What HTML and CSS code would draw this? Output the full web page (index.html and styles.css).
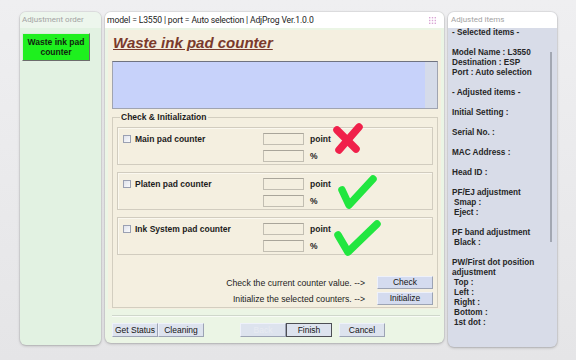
FILE: index.html
```html
<!DOCTYPE html>
<html lang="en">
<head>
  <meta charset="UTF-8" />
  <title>AdjProg - Waste ink pad counter</title>
  <link rel="stylesheet" href="styles.css">
</head>
<body>
  <!-- Left: adjustment order -->
  <div class="win order">
    <div class="titlebar dim">Adjustment order</div>
    <button class="order-item">Waste ink pad<br>counter</button>
  </div>

  <!-- Middle: main dialog -->
  <div class="win main">
    <div class="titlebar">
      <span class="model">model = L3550 | port = Auto selection | AdjProg Ver.1.0.0</span>
      <svg class="grip" width="7" height="7" viewBox="0 0 7 7">
        <g fill="#d9a6d4">
          <rect x="0" y="0" width="1.4" height="1.4"/><rect x="2.8" y="0" width="1.4" height="1.4"/><rect x="5.6" y="0" width="1.4" height="1.4"/>
          <rect x="0" y="2.8" width="1.4" height="1.4"/><rect x="2.8" y="2.8" width="1.4" height="1.4"/><rect x="5.6" y="2.8" width="1.4" height="1.4"/>
          <rect x="0" y="5.6" width="1.4" height="1.4"/><rect x="2.8" y="5.6" width="1.4" height="1.4"/><rect x="5.6" y="5.6" width="1.4" height="1.4"/>
        </g>
      </svg>
    </div>
    <div class="main-body">
      <div class="panel">
        <h1 class="heading">Waste ink pad counter</h1>
        <div class="status-box"><div class="status-scroll"></div></div>

        <fieldset class="group">
          <legend>Check &amp; Initialization</legend>

          <div class="counter">
            <span class="check"></span>
            <span class="label">Main pad counter</span>
            <span class="field"></span><span class="unit">point</span>
            <span></span><span></span>
            <span class="field"></span><span class="unit">%</span>
            <svg class="mark mark-x" width="32" height="32" viewBox="0 0 32 32">
              <g stroke="#f0204a" stroke-width="7.5" stroke-linecap="round" fill="none">
                <path d="M5 8 L24 27"/>
                <path d="M27 5 L7 28"/>
              </g>
            </svg>
          </div>

          <div class="counter">
            <span class="check"></span>
            <span class="label">Platen pad counter</span>
            <span class="field"></span><span class="unit">point</span>
            <span></span><span></span>
            <span class="field"></span><span class="unit">%</span>
            <svg class="mark mark-ok1" width="41" height="38" viewBox="0 0 41 38">
              <path d="M5 17 L12 32 L36 6" stroke="#22e640" stroke-width="7.5" stroke-linecap="round" stroke-linejoin="round" fill="none"/>
            </svg>
          </div>

          <div class="counter">
            <span class="check"></span>
            <span class="label">Ink System pad counter</span>
            <span class="field"></span><span class="unit">point</span>
            <span></span><span></span>
            <span class="field"></span><span class="unit">%</span>
            <svg class="mark mark-ok2" width="49" height="39" viewBox="0 0 49 39">
              <path d="M5 17 L15 34 L44 6" stroke="#22e640" stroke-width="7.5" stroke-linecap="round" stroke-linejoin="round" fill="none"/>
            </svg>
          </div>

          <div class="actions">
            <span>Check the current counter value. --&gt;</span>
            <button class="btn">Check</button>
            <span>Initialize the selected counters. --&gt;</span>
            <button class="btn">Initialize</button>
          </div>
        </fieldset>
      </div>

      <div class="separator"></div>

      <div class="footer">
        <div class="btn-pair">
          <button class="btn foot">Get Status</button>
          <button class="btn foot">Cleaning</button>
        </div>
        <div class="btn-pair nav">
          <button class="btn foot" disabled>Back</button>
          <button class="btn foot default">Finish</button>
        </div>
        <button class="btn foot">Cancel</button>
      </div>
    </div>
  </div>

  <!-- Right: adjusted items -->
  <div class="win items">
    <div class="titlebar dim">Adjusted items</div>
    <div class="item-list">
      <p>- Selected items -</p>
      <p>Model Name : L3550<br>Destination : ESP<br>Port : Auto selection</p>
      <p>- Adjusted items -</p>
      <p>Initial Setting :</p>
      <p>Serial No. :</p>
      <p>MAC Address :</p>
      <p>Head ID :</p>
      <p>PF/EJ adjustment<br><span class="sub">Smap :</span><br><span class="sub">Eject :</span></p>
      <p>PF band adjustment<br><span class="sub">Black :</span></p>
      <p>PW/First dot position<br>adjustment<br><span class="sub">Top :</span><br><span class="sub">Left :</span><br><span class="sub">Right :</span><br><span class="sub">Bottom :</span><br><span class="sub">1st dot :</span></p>
    </div>
    <div class="scrollbar"></div>
  </div>
</body>
</html>
```

FILE: styles.css
```css
/* ==========================================================================
   Page
   ========================================================================== */
*, *::before, *::after {
  box-sizing: border-box;
}
body {
  margin: 0;
  width: 576px;
  height: 360px;
  overflow: hidden;
  padding: 12px 0 0 20px;
  display: flex;
  align-items: flex-start;
  gap: 4px;
  font-family: "Liberation Sans", Arial, sans-serif;
  color: #1c1c1c;
  background: linear-gradient(180deg, #efeff1, #e5e5e7);
}
button {
  font-family: inherit;
}

/* ==========================================================================
   Windows
   ========================================================================== */
.win {
  position: relative;
  border-radius: 6px;
  overflow: hidden;
  box-shadow: 0 1px 3px rgba(0, 0, 0, 0.22), 0 0 0 1px rgba(0, 0, 0, 0.05);
  display: flex;
  flex-direction: column;
}
.titlebar {
  height: 16px;
  line-height: 16px;
  padding-left: 2px;
  font-family: Roboto, sans-serif;
  font-size: 8px;
  color: #222;
  background: #fff;
  display: flex;
  justify-content: space-between;
  align-items: center;
  white-space: nowrap;
}
.titlebar.dim {
  color: #a3a3a3;
}
.model {
  font-size: 8.6px;
  letter-spacing: -0.15px;
}

/* Left window */
.order {
  width: 81px;
  height: 333px;
  background: #e2f2e2;
}
.order .titlebar {
  background: #edf6ed;
}
.order-item {
  margin: 5px 0 0 2px;
  width: 68px;
  height: 28px;
  padding: 0;
  font-size: 8.5px;
  font-weight: bold;
  line-height: 10px;
  color: #10250f;
  background: #1ef01e;
  border: 1px solid;
  border-color: #d8ecd8 #6c6c6c #6c6c6c #d8ecd8;
}

/* Middle window */
.main {
  width: 339px;
  height: 331px;
  background: #ebf5e5;
}
.main .titlebar {
  padding-right: 8px;
}
.main-body {
  padding: 2px 3px 0 3px;
}
.panel {
  background: #f4efe0;
  padding: 4px 3px 1px 4px;
}
.heading {
  margin: 0 0 9px 1px;
  font-size: 15px;
  line-height: 18px;
  font-style: italic;
  font-weight: bold;
  text-decoration: underline;
  color: #7a3a2c;
}
.status-box {
  height: 48px;
  display: flex;
  background: #c7d2fa;
  border: 1px solid #a0a4b0;
  border-top-color: #6f7380;
  margin-bottom: 3px;
}
.status-scroll {
  margin-left: auto;
  width: 12px;
  background: #d5dbe9;
}

/* Check & Initialization group */
.group {
  margin: 0;
  padding: 5px 4px 2px 4px;
  border: 1px solid #d3cec0;
  min-width: 0;
}
.group legend {
  margin-left: 3px;
  padding: 0 1px;
  font-size: 8.5px;
  line-height: 10px;
  font-weight: bold;
}
.counter {
  position: relative;
  height: 38px;
  margin-bottom: 7px;
  padding: 5px 0 0 5px;
  border: 1px solid #d1ccbf;
  box-shadow: inset 1px 1px 0 #fbf8ef;
  display: grid;
  grid-template-columns: 8px 124px 41px auto;
  grid-template-rows: 12px 13px;
  column-gap: 4px;
  row-gap: 4px;
  align-items: center;
  font-size: 8.5px;
  font-weight: bold;
}
.counter:last-of-type {
  height: 39px;
}
.counter .field {
  height: 12px;
  border: 1px solid #c2beb2;
  border-top-color: #a9a59a;
  background: #f4efe0;
}
.counter .field + .unit {
  margin-left: 2px;
}
.check {
  width: 8px;
  height: 8px;
  border: 1px solid #9aa0b2;
  background: linear-gradient(135deg, #dfe2ea, #fafbfd);
}
.mark {
  position: absolute;
}
.mark-x {
  left: 214px;
  top: -6px;
}
.mark-ok1 {
  left: 219px;
  top: 0;
}
.mark-ok2 {
  left: 215px;
  top: 0;
}

.actions {
  margin-top: 21px;
  display: grid;
  grid-template-columns: 1fr 56px;
  column-gap: 12px;
  row-gap: 3px;
  align-items: center;
  justify-items: end;
  font-size: 8.7px;
}
.btn {
  height: 13px;
  width: 56px;
  padding: 0;
  font-size: 8.5px;
  line-height: 11px;
  color: #151515;
  background: #d4dbef;
  border: 1px solid;
  border-color: #eef1fa #9ca3b4 #9ca3b4 #eef1fa;
}

/* Bottom buttons */
.separator {
  margin: 6px 1px 0 4px;
  height: 2px;
  border-top: 1px solid #cfd7cc;
  border-bottom: 1px solid #f8fcf6;
}
.footer {
  margin: 6px 0 0 4px;
  display: flex;
  align-items: center;
}
.btn-pair {
  display: flex;
}
.btn.foot {
  width: 46px;
  height: 14px;
  background: #dde3ee;
}
.nav {
  margin-left: 36px;
  margin-right: 7px;
}
.btn.foot:disabled {
  color: #e8ebf2;
}
.btn.default {
  border: 1px solid #4d4f55;
}

/* Right window */
.items {
  width: 109px;
  height: 335px;
  background: #d8dce8;
}
.items .titlebar {
  padding-left: 3px;
}
.item-list {
  padding: 0 0 0 4px;
  font-size: 8.2px;
  line-height: 10px;
  font-weight: bold;
  color: #262626;
}
.item-list p {
  margin: 0 0 10px 0;
  white-space: nowrap;
}
.sub {
  padding-left: 2px;
}
.scrollbar {
  position: absolute;
  left: 102px;
  top: 40px;
  width: 2px;
  height: 190px;
  background: #a2a7b2;
}
```
